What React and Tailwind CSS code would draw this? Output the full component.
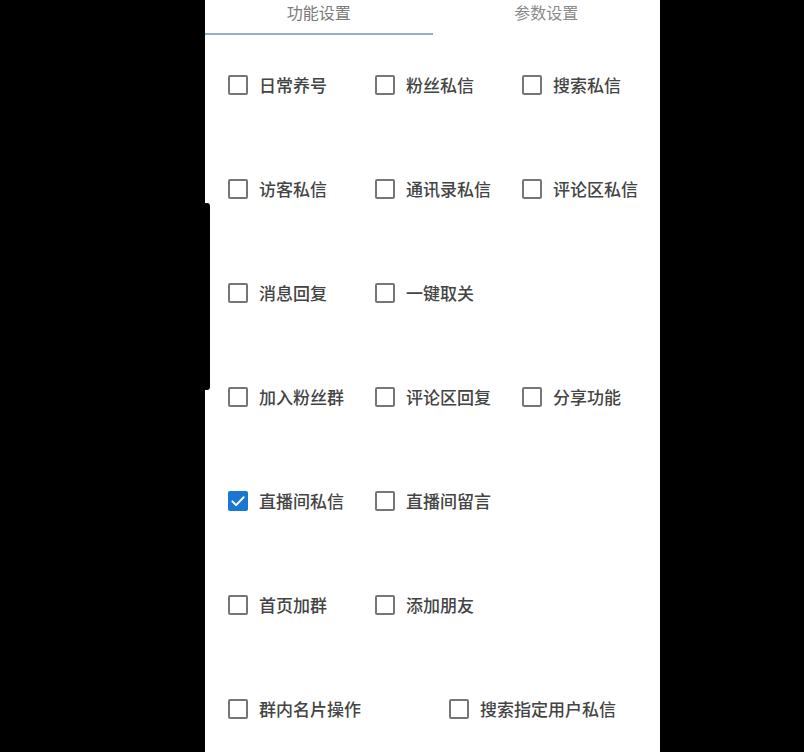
import { useState } from 'react'

const rows = [
  [{ label: '日常养号' }, { label: '粉丝私信' }, { label: '搜索私信' }],
  [{ label: '访客私信' }, { label: '通讯录私信' }, { label: '评论区私信' }],
  [{ label: '消息回复' }, { label: '一键取关' }],
  [{ label: '加入粉丝群' }, { label: '评论区回复' }, { label: '分享功能' }],
  [{ label: '直播间私信', checked: true }, { label: '直播间留言' }],
  [{ label: '首页加群' }, { label: '添加朋友' }],
  [{ label: '群内名片操作', wide: true }, { label: '搜索指定用户私信' }],
]

function Check({ checked }) {
  if (checked) {
    return (
      <span className="w-[20px] h-[20px] rounded-[2px] bg-[#1976d2] flex items-center justify-center shrink-0">
        <svg className="w-[18px] h-[18px]" viewBox="0 0 24 24" fill="none" stroke="white" strokeWidth={2.6} strokeLinecap="round" strokeLinejoin="round">
          <path d="M4.5 12.5l5 5L19.5 7" />
        </svg>
      </span>
    )
  }
  return <span className="w-[20px] h-[20px] rounded-[2px] border-2 border-[#767676] bg-white shrink-0" />
}

export default function App() {
  const [tab] = useState(0)

  return (
    <div className="w-[804px] h-[752px] bg-black flex overflow-hidden" style={{ fontFamily: '"Noto Sans CJK SC", "Noto Sans", sans-serif' }}>
      <div className="ml-[205px] w-[455px] h-full bg-white relative overflow-hidden">
        {/* side handle */}
        <div className="absolute left-0 top-[203px] w-[5px] h-[187px] bg-black rounded-r-[3px]" />

        <div className="flex h-[35px]">
          {['功能设置', '参数设置'].map((t, i) => (
            <div
              key={t}
              className={`w-1/2 flex justify-center pt-[1px] text-[16px] leading-[22px] ${
                tab === i ? 'text-[#7b7b7b] border-b-2 border-[#8eb1c9]' : 'text-[#8a8a8a]'
              }`}
            >
              {t}
            </div>
          ))}
        </div>

        <div className="pl-[23px]">
          {rows.map((row, ri) => (
            <div key={ri} className="flex h-[104px] pt-[40px] items-start">
              {row.map((it) => (
                <div key={it.label} className={`${it.wide ? 'w-[221px]' : 'w-[147px]'} shrink-0 flex items-center h-[20px] gap-[11px]`}>
                  <Check checked={it.checked} />
                  <span className="text-[17px] leading-[20px] font-medium text-[#444] whitespace-nowrap">{it.label}</span>
                </div>
              ))}
            </div>
          ))}
        </div>
      </div>
    </div>
  )
}
